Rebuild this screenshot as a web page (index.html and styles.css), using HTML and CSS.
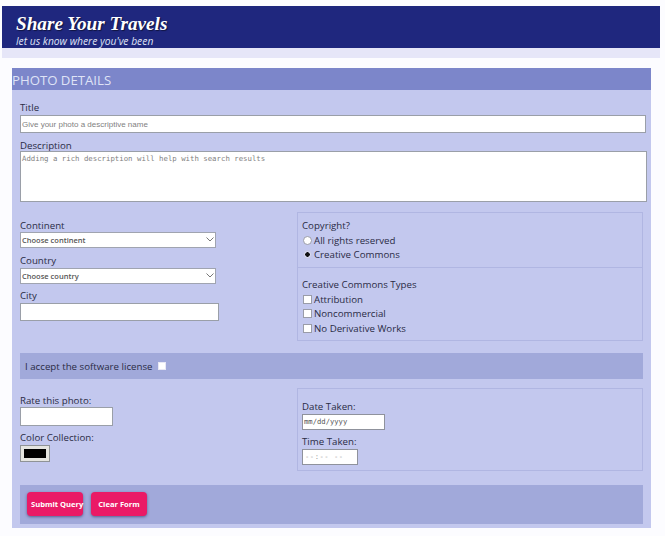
FILE: index.html
```
<!DOCTYPE html>
<html lang="en">
<head>
<meta charset="utf-8">
<title>Share Your Travels</title>
<link rel="stylesheet" href="styles.css">
</head>
<body>
<header class="site-header">
  <h1 class="brand">Share Your Travels</h1>
  <p class="tagline">let us know where you've been</p>
</header>
<div class="band"></div>
<form class="panel">
  <h2 class="panel-title">PHOTO DETAILS</h2>
  <div class="panel-body">
    <div class="field title-field">
      <label class="lbl" for="t">Title</label>
      <input class="text title-input" id="t" type="text" placeholder="Give your photo a descriptive name">
    </div>
    <div class="field desc-field">
      <label class="lbl" for="d">Description</label>
      <textarea class="text desc-input" id="d" placeholder="Adding a rich description will help with search results"></textarea>
    </div>
    <div class="cols first-cols">
      <div class="col-left loc">
        <label class="lbl" for="c1">Continent</label>
        <div class="select-wrap"><select class="select" id="c1"><option>Choose continent</option></select><svg class="chev" viewBox="0 0 8 5" width="8" height="5"><path d="M.5.5 4 4 7.500.5" fill="none" stroke="#777" stroke-width="1"/></svg></div>
        <label class="lbl country-lbl" for="c2">Country</label>
        <div class="select-wrap"><select class="select" id="c2"><option>Choose country</option></select><svg class="chev" viewBox="0 0 8 5" width="8" height="5"><path d="M.5.5 4 4 7.500.5" fill="none" stroke="#777" stroke-width="1"/></svg></div>
        <label class="lbl city-lbl" for="c3">City</label>
        <input class="text city" id="c3" type="text">
      </div>
      <div class="col-right">
        <div class="box copy-box">
          <div class="lbl">Copyright?</div>
          <label class="opt"><input class="mark radio" type="radio" name="cp">All rights reserved</label>
          <label class="opt"><input class="mark radio" type="radio" name="cp" checked>Creative Commons</label>
        </div>
        <div class="box cc-box">
          <div class="lbl">Creative Commons Types</div>
          <label class="opt"><input class="mark check" type="checkbox">Attribution</label>
          <label class="opt"><input class="mark check" type="checkbox">Noncommercial</label>
          <label class="opt"><input class="mark check" type="checkbox">No Derivative Works</label>
        </div>
      </div>
    </div>
    <div class="license"><label class="lic-label" for="l">I accept the software license</label><input class="mark check lic-check" id="l" type="checkbox"></div>
    <div class="cols second-cols">
      <div class="col-left rate">
        <label class="lbl" for="r">Rate this photo:</label>
        <input class="text rate-input" id="r" type="text">
        <label class="lbl color-lbl" for="cc">Color Collection:</label>
        <span class="swatch" id="cc"><span class="swatch-fill"></span></span>
      </div>
      <div class="col-right">
        <div class="box date-box">
          <label class="lbl" for="dt">Date Taken:</label>
          <div class="fake date" id="dt">mm/dd/yyyy</div>
          <label class="lbl time-lbl" for="tm">Time Taken:</label>
          <div class="fake time" id="tm">--:-- --</div>
        </div>
      </div>
    </div>
    <div class="actions">
      <button class="btn submit" type="button">Submit Query</button>
      <button class="btn" type="button">Clear Form</button>
    </div>
  </div>
</form>
</body>
</html>
```
FILE: styles.css
```
* { box-sizing: border-box; }
html, body { margin: 0; padding: 0; }
body {
  background: #fcfcff;
  color: #2a2b45;
  font-family: "Open Sans", sans-serif;
  font-size: 9.7px;
  padding-top: 6px;
  height: 536px;
  overflow: hidden;
}
.site-header {
  margin: 0 5px 0 2px;
  height: 42px;
  background: #1f277e;
  padding: 7px 0 0 14px;
  color: #fff;
}
.brand {
  margin: 0;
  font-family: "Liberation Serif", serif;
  font-style: italic;
  font-weight: 700;
  font-size: 19.2px;
  line-height: 22px;
  text-shadow: 1px 1px 1px rgba(0, 0, 0, .5);
}
.tagline {
  margin: 0;
  font-family: "Open Sans", sans-serif;
  font-style: italic;
  font-size: 10.3px;
  line-height: 12px;
  color: #dfe2f5;
}
.band { height: 10px; margin: 0 5px 0 2px; background: #e6e6f8; }
.panel {
  margin: 10px 14px 0 12px;
  width: 639px;
  height: 460px;
  background: #c3c8ee;
}
.panel-title {
  margin: 0;
  height: 22px;
  background: #7c86ca;
  color: #dfe3f6;
  font-size: 13.2px;
  font-weight: 400;
  line-height: 24px;
}
.panel-body { padding: 11px 8px 0; }
.lbl { display: block; font-size: 9.7px; height: 14px; line-height: 16px; color: #2a2b45; }
.text {
  display: block;
  background: #fff;
  border: 1px solid #9a9fa8;
  border-radius: 0;
  outline: 0;
  padding: 0 1px;
  margin: 0;
}
.text::placeholder { color: #7f7f7f; opacity: 1; }
.title-field { height: 35px; }
.title-field .lbl { line-height: 14px; }
.title-input {
  width: 626px;
  height: 18px;
  font-family: "Liberation Sans", sans-serif;
  font-size: 8px;
}
.desc-field { margin-top: 1px; }
.desc-field .lbl { line-height: 18px; }
.desc-input {
  width: 627px;
  height: 51px;
  resize: none;
  padding: 2px 1px;
  font-family: "DejaVu Sans Mono", monospace;
  font-size: 7.350px;
}
.cols { display: grid; grid-template-columns: 277px 346px; }
.first-cols { margin-top: 10px; height: 141px; }
.loc { padding-top: 6px; }
.select-wrap { position: relative; width: 196px; height: 16px; }
.select {
  display: block;
  width: 100%;
  height: 100%;
  appearance: none;
  background: #fff;
  border: 1px solid #a0a4b0;
  border-radius: 0;
  padding: 0 1px;
  color: #555;
  font-family: "Open Sans", sans-serif;
  font-size: 7.500px;
  font-weight: 600;
}
.chev { position: absolute; right: 2px; top: 5px; }
.country-lbl { margin-top: 6px; line-height: 14px; }
.city-lbl { margin-top: 5px; line-height: 14px; }
.city { width: 199px; height: 18px; }
.box { border: 1px solid #b0b6e2; padding: 6px 4px 0; }
.copy-box { height: 55px; border-bottom: 0; padding-top: 5px; }
.cc-box { height: 74px; padding-top: 9px; }
.opt { display: flex; align-items: center; height: 14.500px; padding-top: 2px; font-size: 9.700px; }
.mark {
  appearance: none;
  margin: 0 2px 0 1px;
  width: 9px;
  height: 9px;
  flex: none;
  background: #fff;
  border: 1px solid #9a9ca8;
}
.radio { border-radius: 50%; }
.radio:checked { background: radial-gradient(circle, #111 0 2px, #d6d8f0 2.500px); border-color: #c6c9e4; }
.license {
  height: 26px;
  background: #a1a9da;
  display: flex;
  align-items: center;
  padding-left: 5px;
}
.lic-check { margin-left: 5px; width: 8px; height: 8px; border-color: #e8e8f5; }
.second-cols { margin-top: 9px; height: 83px; }
.rate { padding-top: 5px; }
.rate-input { width: 93px; height: 19px; }
.color-lbl { margin-top: 4px; }
.swatch {
  display: block;
  width: 30px;
  height: 17px;
  margin-top: 1px;
  background: #e5e5e0;
  border: 1px solid #8f9396;
  padding: 3px 3px;
}
.swatch-fill { display: block; height: 100%; background: #000; }
.date-box { height: 83px; padding-top: 10px; }
.fake {
  background: #fff;
  border: 1px solid #8f929c;
  height: 16px;
  margin-top: 1px;
  color: #555;
  font-family: "DejaVu Sans Mono", monospace;
  font-size: 7.200px;
  line-height: 14px;
  padding-left: 1px;
}
.date { width: 83px; }
.time { width: 56px; color: #999; letter-spacing: .5px; padding-left: 2px; }
.time-lbl { margin-top: 4px; }
.actions {
  margin-top: 14px;
  height: 39px;
  background: #a1a9da;
  display: flex;
  gap: 8px;
  padding: 7px 0 0 7px;
  align-items: flex-start;
}
.btn {
  width: 56px;
  height: 24px;
  border: 0;
  border-radius: 4px;
  background: #ea1a66;
  color: #fff;
  padding: 0;
  font-family: "Open Sans", sans-serif;
  font-weight: 700;
  font-size: 7.600px;
  white-space: nowrap;
  box-shadow: 0 1px 3px rgba(40, 40, 90, .6);
}
.submit { padding-left: 4px; text-align: left; }
```
